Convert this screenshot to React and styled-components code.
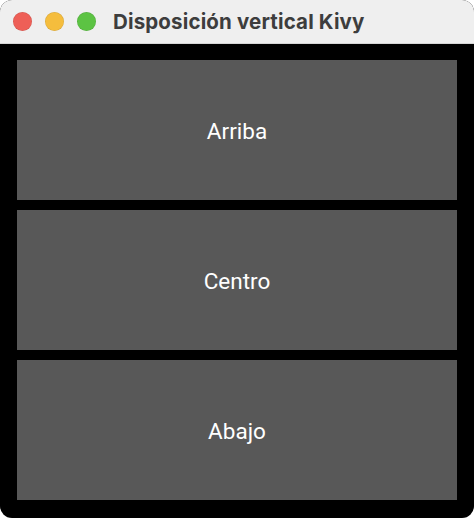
import React from "react";
import styled, { createGlobalStyle } from "styled-components";

const GlobalStyle = createGlobalStyle`
  html, body {
    margin: 0;
    padding: 0;
    background: #ffffff;
  }
`;

const Window = styled.div`
  width: 474px;
  height: 518px;
  display: flex;
  flex-direction: column;
  border-radius: 12px;
  overflow: hidden;
  background: #000;
`;

const TitleBar = styled.div`
  height: 44px;
  flex-shrink: 0;
  display: flex;
  align-items: center;
  padding-left: 13px;
  background: #efefef;
  border-bottom: 1px solid #d6d6d6;
  box-sizing: border-box;
`;

const Lights = styled.div`
  display: flex;
  gap: 13px;
`;

const Light = styled.span`
  width: 19px;
  height: 19px;
  border-radius: 50%;
  background: ${(p) => p.color};
  box-shadow: inset 0 0 0 0.5px rgba(0, 0, 0, 0.12);
`;

const Title = styled.div`
  margin-left: 17px;
  font-family: "Inter", "Liberation Sans", sans-serif;
  font-weight: 700;
  font-size: 20.5px;
  color: #3d3d3d;
  letter-spacing: 0.15px;
`;

const Content = styled.div`
  flex: 1;
  display: flex;
  flex-direction: column;
  gap: 10px;
  padding: 16px 17px 18px 17px;
`;

const KivyButton = styled.div`
  flex: 1;
  display: flex;
  align-items: center;
  justify-content: center;
  padding-top: 2px;
  background: #585858;
  color: #ffffff;
  font-family: "Roboto", "Liberation Sans", sans-serif;
  font-size: 22.5px;
`;

const App = () => {
  const buttons = ["Arriba", "Centro", "Abajo"];

  return (
    <>
      <GlobalStyle />
      <Window>
        <TitleBar>
          <Lights>
            <Light color="#ee5f57" />
            <Light color="#f5bd3d" />
            <Light color="#5cc343" />
          </Lights>
          <Title>Disposición vertical Kivy</Title>
        </TitleBar>
        <Content>
          {buttons.map((label) => (
            <KivyButton key={label}>{label}</KivyButton>
          ))}
        </Content>
      </Window>
    </>
  );
};

export default App;
